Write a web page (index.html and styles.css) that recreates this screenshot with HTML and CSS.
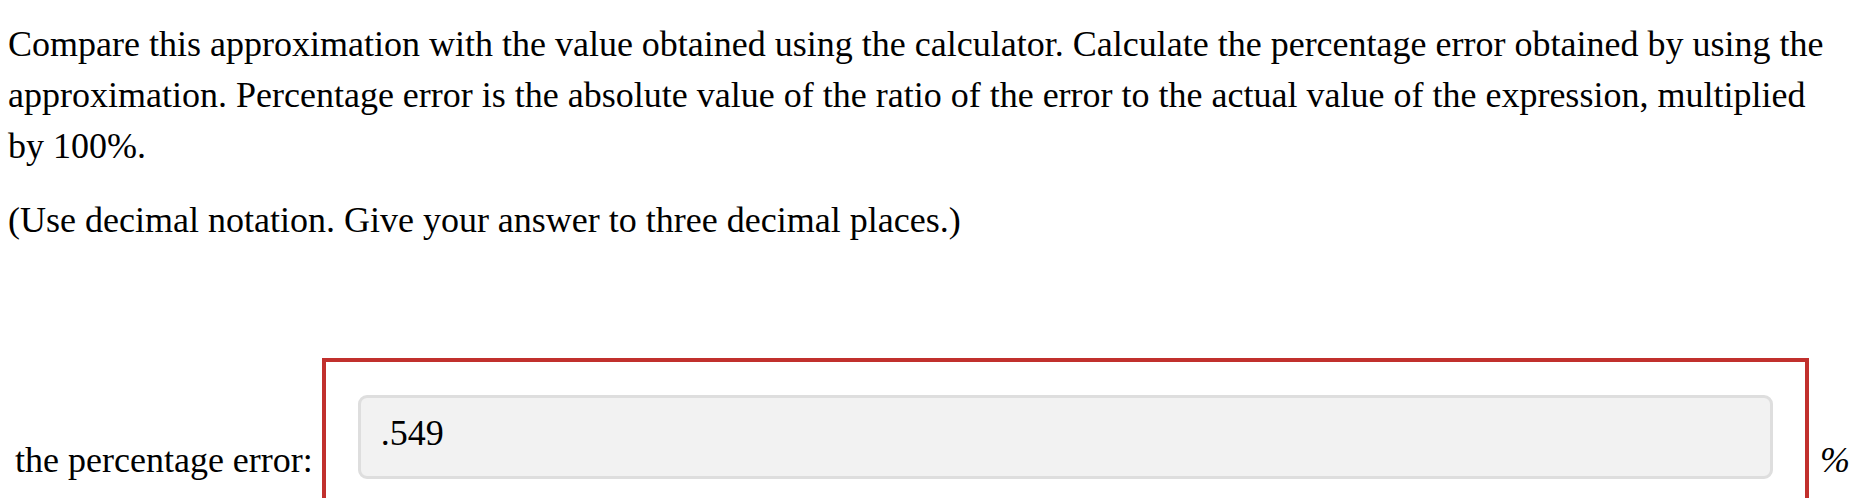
FILE: index.html
```html
<!DOCTYPE html>
<html lang="en">
<head>
    <meta charset="UTF-8">
    <title>Percentage error</title>
    <link rel="stylesheet" href="styles.css">
</head>
<body>
    <div class="question">
        <p class="prompt">Compare this approximation with the value obtained using the calculator. Calculate the percentage error obtained by using the approximation. Percentage error is the absolute value of the ratio of the error to the actual value of the expression, multiplied by 100%.</p>
        <p class="hint">(Use decimal notation. Give your answer to three decimal places.)</p>
        <div class="answer-row">
            <label class="answer-label" for="answer">the percentage error:</label>
            <div class="answer-box wrong">
                <input class="answer-input" id="answer" type="text" value=".549" readonly>
            </div>
            <span class="unit">%</span>
        </div>
    </div>
</body>
</html>
```

FILE: styles.css
```css
body {
    margin: 0;
    background: #ffffff;
    color: #000000;
    font-family: 'Liberation Serif', 'Times New Roman', serif;
    font-size: 36px;
    line-height: 51px;
    overflow: hidden;
}
.question {
    padding: 19px 8px 0 8px;
}
.prompt {
    margin: 0 8px 0 0;
}
.hint {
    margin: 23px 0 0 0;
}
.answer-row {
    display: flex;
    align-items: flex-start;
    margin-top: 112px;
}
.answer-label {
    margin: 77px 9px 0 7px;
}
.answer-box {
    flex: 1;
    padding: 33px 32px 40px 32px;
    border: 4px solid #c1302d;
}
.answer-box.wrong {
    border-color: #c1302d;
}
.answer-input {
    display: block;
    width: 100%;
    box-sizing: border-box;
    height: 84px;
    padding: 0 0 8px 20px;
    border: 3px solid #dedede;
    border-radius: 9px;
    background: #f2f2f2;
    font-family: inherit;
    font-size: 36px;
    color: #000000;
    outline: none;
}
.unit {
    margin: 77px 0 0 11px;
    font-style: italic;
}
```
